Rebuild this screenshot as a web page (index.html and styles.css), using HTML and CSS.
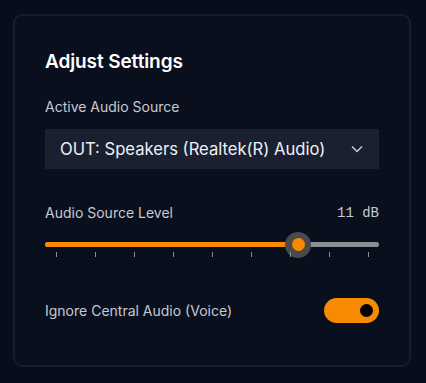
FILE: index.html
```html
<!DOCTYPE html>
<html>
<head>
<meta charset="utf-8">
<link rel="stylesheet" href="styles.css">
</head>
<body>
<div class="card">
  <h2 class="title">Adjust Settings</h2>
  <div class="label">Active Audio Source</div>
  <div class="select">
    <span class="select-text">OUT: Speakers (Realtek(R) Audio)</span>
    <svg class="chev" width="12" height="8" viewBox="0 0 12 8"><path d="M1 1.5 L6 6.5 L11 1.5" fill="none" stroke="#c9ced8" stroke-width="1.4"/></svg>
  </div>
  <div class="level-row">
    <span class="label">Audio Source Level</span>
    <span class="value">11 dB</span>
  </div>
  <div class="slider">
    <div class="track">
      <div class="fill" style="width: 253px"></div>
      <div class="thumb" style="left: 253px"><span class="thumb-dot"></span></div>
    </div>
    <div class="ticks">
      <span></span><span></span><span></span><span></span><span></span><span></span><span></span><span></span><span></span>
    </div>
  </div>
  <div class="toggle-row">
    <span class="label">Ignore Central Audio (Voice)</span>
    <span class="toggle"><span class="knob"></span></span>
  </div>
</div>
</body>
</html>
```
FILE: styles.css
```css
* { box-sizing: border-box; }
html, body { margin: 0; padding: 0; }
body {
  background: #070d1b;
  width: 426px;
  height: 383px;
  overflow: hidden;
  font-family: Inter, "Noto Sans", sans-serif;
  padding: 14px 0 0 13px;
}
.card {
  width: 398px;
  height: 353px;
  border: 2px solid #171d2a;
  border-radius: 9px;
  background: #0a0f1e;
  padding: 34px 30px 0 30px;
  display: flex;
  flex-direction: column;
}
.title {
  margin: 0;
  font-size: 19px;
  line-height: 24px;
  font-weight: 600;
  color: #ffffff;
  letter-spacing: -0.1px;
}
.label {
  font-size: 14px;
  line-height: 20px;
  color: #c6cad3;
  margin-top: 23px;
}
.select {
  margin-top: 12px;
  height: 40px;
  background: #1a2030;
  display: flex;
  align-items: center;
  justify-content: space-between;
  padding: 0 16px 0 15px;
}
.select-text {
  font-size: 16.6px;
  color: #eef0f4;
}
.chev { display: block; }
.level-row {
  margin-top: 34px;
  display: flex;
  justify-content: space-between;
  align-items: center;
}
.level-row .label { margin-top: 0; }
.value {
  font-family: "Liberation Mono", monospace;
  font-size: 14px;
  line-height: 20px;
  color: #c6cad3;
}
.slider {
  margin-top: 8px;
  position: relative;
  height: 26px;
}
.track {
  position: relative;
  top: 11px;
  height: 5px;
  border-radius: 3px;
  background: #8b8e95;
}
.fill {
  position: absolute;
  left: 0;
  top: 0;
  bottom: 0;
  background: #f78a00;
  border-radius: 3px 0 0 3px;
}
.thumb {
  position: absolute;
  top: 50%;
  width: 26px;
  height: 26px;
  margin: -13px 0 0 -13px;
  border-radius: 50%;
  background: #4a4a4c;
  display: flex;
  align-items: center;
  justify-content: center;
}
.thumb-dot {
  width: 13px;
  height: 13px;
  border-radius: 50%;
  background: #f78a00;
}
.ticks {
  position: absolute;
  left: 0;
  right: 0;
  top: 21px;
  padding: 0 10px 0 11px;
  display: flex;
  justify-content: space-between;
}
.ticks span {
  width: 1px;
  height: 5px;
  background: #8b8e95;
}
.toggle-row {
  margin-top: 41px;
  display: flex;
  justify-content: space-between;
  align-items: center;
}
.toggle-row .label { margin-top: 0; }
.toggle {
  width: 55px;
  height: 25px;
  border-radius: 13px;
  background: #f78a00;
  display: flex;
  align-items: center;
  justify-content: flex-end;
  padding-right: 6px;
}
.knob {
  width: 13px;
  height: 13px;
  border-radius: 50%;
  background: #000;
}
```
